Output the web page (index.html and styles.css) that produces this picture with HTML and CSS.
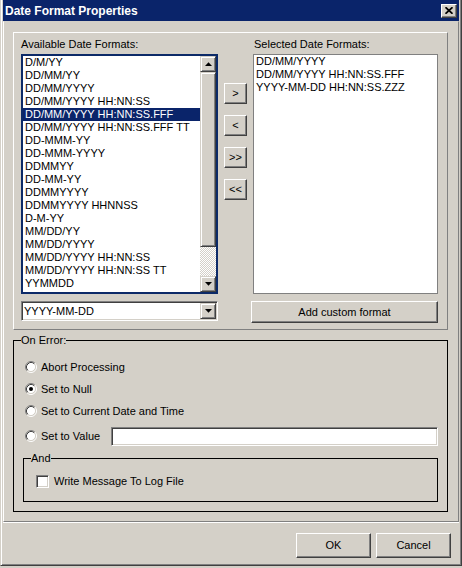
FILE: index.html
```html
<!DOCTYPE html>
<html>
<head>
<meta charset="utf-8">
<title>Date Format Properties</title>
<link rel="stylesheet" href="styles.css">
</head>
<body>
<div class="window">
  <div class="titlebar">
    <span class="title">Date Format Properties</span>
    <span class="close"><svg width="8" height="7" viewBox="0 0 8 7"><path d="M0.5 0.2 L7.5 6.8 M7.5 0.2 L0.5 6.8" stroke="#000" stroke-width="1.7" fill="none"/></svg></span>
  </div>
  <div class="frame">
    <div class="panel">
      <div class="col-left">
        <div class="label">Available Date Formats:</div>
        <div class="listbox focused">
          <div class="items">
            <div class="item">D/M/YY</div>
            <div class="item">DD/MM/YY</div>
            <div class="item">DD/MM/YYYY</div>
            <div class="item">DD/MM/YYYY HH:NN:SS</div>
            <div class="item selected">DD/MM/YYYY HH:NN:SS.FFF</div>
            <div class="item">DD/MM/YYYY HH:NN:SS.FFF TT</div>
            <div class="item">DD-MMM-YY</div>
            <div class="item">DD-MMM-YYYY</div>
            <div class="item">DDMMYY</div>
            <div class="item">DD-MM-YY</div>
            <div class="item">DDMMYYYY</div>
            <div class="item">DDMMYYYY HHNNSS</div>
            <div class="item">D-M-YY</div>
            <div class="item">MM/DD/YY</div>
            <div class="item">MM/DD/YYYY</div>
            <div class="item">MM/DD/YYYY HH:NN:SS</div>
            <div class="item">MM/DD/YYYY HH:NN:SS TT</div>
            <div class="item">YYMMDD</div>
            <div class="item">YYYYMMDD</div>
          </div>
          <div class="vscroll">
            <div class="sbtn"><svg width="7" height="4" viewBox="0 0 7 4"><polygon points="0,4 7,4 3.5,0.3" fill="#000"/></svg></div>
            <div class="thumb"></div>
            <div class="track"></div>
            <div class="sbtn"><svg width="7" height="4" viewBox="0 0 7 4"><polygon points="0,0 7,0 3.5,3.7" fill="#000"/></svg></div>
          </div>
        </div>
        <div class="combo">
          <span class="combo-text">YYYY-MM-DD</span>
          <span class="sbtn"><svg width="7" height="4" viewBox="0 0 7 4"><polygon points="0,0 7,0 3.5,3.7" fill="#000"/></svg></span>
        </div>
      </div>
      <div class="col-mid">
        <button class="btn move">&gt;</button>
        <button class="btn move">&lt;</button>
        <button class="btn move">&gt;&gt;</button>
        <button class="btn move">&lt;&lt;</button>
      </div>
      <div class="col-right">
        <div class="label label-right">Selected Date Formats:</div>
        <div class="listbox plain">
          <div class="items">
            <div class="item">DD/MM/YYYY</div>
            <div class="item">DD/MM/YYYY HH:NN:SS.FFF</div>
            <div class="item">YYYY-MM-DD HH:NN:SS.ZZZ</div>
          </div>
        </div>
        <button class="btn wide">Add custom format</button>
      </div>
    </div>

    <fieldset class="group onerror">
      <legend>On Error:</legend>
      <div class="group-body">
        <div class="radio-row">
          <svg class="radio" width="12" height="12" viewBox="0 0 12 12"><circle cx="6" cy="6" r="4.5" fill="#fff"/><path d="M2.11 9.89 A5.5 5.5 0 0 1 9.89 2.11" stroke="#808080" fill="none"/><path d="M9.89 2.11 A5.5 5.5 0 0 1 2.11 9.89" stroke="#fff" fill="none"/><path d="M2.82 9.18 A4.5 4.5 0 0 1 9.18 2.82" stroke="#404040" fill="none"/><path d="M9.18 2.82 A4.5 4.5 0 0 1 2.82 9.18" stroke="#d4d0c8" fill="none"/></svg>
          <span>Abort Processing</span>
        </div>
        <div class="radio-row">
          <svg class="radio" width="12" height="12" viewBox="0 0 12 12"><circle cx="6" cy="6" r="4.5" fill="#fff"/><path d="M2.11 9.89 A5.5 5.5 0 0 1 9.89 2.11" stroke="#808080" fill="none"/><path d="M9.89 2.11 A5.5 5.5 0 0 1 2.11 9.89" stroke="#fff" fill="none"/><path d="M2.82 9.18 A4.5 4.5 0 0 1 9.18 2.82" stroke="#404040" fill="none"/><path d="M9.18 2.82 A4.5 4.5 0 0 1 2.82 9.18" stroke="#d4d0c8" fill="none"/><circle cx="6" cy="6" r="2" fill="#000"/></svg>
          <span>Set to Null</span>
        </div>
        <div class="radio-row">
          <svg class="radio" width="12" height="12" viewBox="0 0 12 12"><circle cx="6" cy="6" r="4.5" fill="#fff"/><path d="M2.11 9.89 A5.5 5.5 0 0 1 9.89 2.11" stroke="#808080" fill="none"/><path d="M9.89 2.11 A5.5 5.5 0 0 1 2.11 9.89" stroke="#fff" fill="none"/><path d="M2.82 9.18 A4.5 4.5 0 0 1 9.18 2.82" stroke="#404040" fill="none"/><path d="M9.18 2.82 A4.5 4.5 0 0 1 2.82 9.18" stroke="#d4d0c8" fill="none"/></svg>
          <span>Set to Current Date and Time</span>
        </div>
        <div class="radio-row value-row">
          <svg class="radio" width="12" height="12" viewBox="0 0 12 12"><circle cx="6" cy="6" r="4.5" fill="#fff"/><path d="M2.11 9.89 A5.5 5.5 0 0 1 9.89 2.11" stroke="#808080" fill="none"/><path d="M9.89 2.11 A5.5 5.5 0 0 1 2.11 9.89" stroke="#fff" fill="none"/><path d="M2.82 9.18 A4.5 4.5 0 0 1 9.18 2.82" stroke="#404040" fill="none"/><path d="M9.18 2.82 A4.5 4.5 0 0 1 2.82 9.18" stroke="#d4d0c8" fill="none"/></svg>
          <span class="value-label">Set to Value</span>
          <span class="textbox"></span>
        </div>

        <fieldset class="group and">
          <legend>And</legend>
          <div class="and-body">
            <div class="check-row">
              <span class="checkbox"></span>
              <span>Write Message To Log File</span>
            </div>
          </div>
        </fieldset>
      </div>
    </fieldset>
  </div>
  <div class="footer">
    <button class="btn action">OK</button>
    <button class="btn action">Cancel</button>
  </div>
</div>
</body>
</html>
```

FILE: styles.css
```css
* { box-sizing: border-box; }

html, body {
  margin: 0;
  padding: 0;
}

body {
  width: 462px;
  height: 568px;
  overflow: hidden;
  background: #d4d0c8;
  font-family: "Liberation Sans", Arial, sans-serif;
  font-size: 11px;
  line-height: 13px;
  color: #000;
}

.window {
  width: 462px;
  height: 566px;
  display: flex;
  flex-direction: column;
  background: #d4d0c8;
  border-left: 1px solid #d4d0c8;
  border-right: 1px solid #404040;
  border-bottom: 1px solid #404040;
  padding: 0 2px 2px 2px;
  box-shadow: inset 1px 0 #fff, inset -1px -1px #808080;
}

/* title bar */
.titlebar {
  height: 21px;
  flex: none;
  display: flex;
  align-items: center;
  justify-content: space-between;
  background: #0a246a;
  padding: 0 2px 0 2px;
}

.title {
  color: #fff;
  font-weight: bold;
  font-size: 12px;
  line-height: 14px;
  padding-top: 1px;
}

.close {
  width: 16px;
  height: 14px;
  display: flex;
  align-items: center;
  justify-content: center;
  background: #d4d0c8;
  border: 1px solid;
  border-color: #fff #404040 #404040 #fff;
  box-shadow: inset -1px -1px #808080;
}

/* main frame */
.frame {
  flex: none;
  height: 501px;
  border: 1px solid;
  border-color: #d4d0c8 #808080 #808080 #fff;
  padding: 10px 10px 9px 9px;
}

.panel {
  height: 298px;
  display: flex;
  align-items: flex-start;
  border: 1px solid;
  border-color: #fff #808080 #808080 #fff;
  padding: 5px 9px 0 7px;
}

.col-left {
  width: 197px;
  flex: none;
}

.col-mid {
  width: 23px;
  flex: none;
  margin-left: 6px;
  padding-top: 45px;
  display: flex;
  flex-direction: column;
  gap: 11px;
}

.col-right {
  width: 187px;
  flex: none;
  margin-left: 4px;
}

.label {
  height: 13px;
  white-space: nowrap;
}

.label-right {
  padding-left: 3px;
}

/* list boxes */
.listbox {
  margin-top: 3px;
  height: 240px;
  background: #fff;
  display: flex;
  overflow: hidden;
}

.listbox.focused {
  border: 2px solid #0c2a68;
}

.listbox.plain {
  margin-left: 2px;
  width: 185px;
  border: 1px solid #808080;
}

.items {
  flex: 1;
  min-width: 0;
  overflow: hidden;
}

.item {
  height: 13px;
  line-height: 13px;
  padding-left: 2px;
  white-space: nowrap;
}

.item.selected {
  background: #0a246a;
  color: #fff;
}

.plain .item {
  padding-left: 2px;
}

/* scrollbar */
.vscroll {
  width: 16px;
  flex: none;
  display: flex;
  flex-direction: column;
}

.sbtn {
  width: 16px;
  height: 16px;
  flex: none;
  display: flex;
  align-items: center;
  justify-content: center;
  background: #d4d0c8;
  border: 1px solid;
  border-color: #d4d0c8 #404040 #404040 #d4d0c8;
  box-shadow: inset 1px 1px #fff, inset -1px -1px #808080;
}

.thumb {
  height: 175px;
  flex: none;
  background: #d4d0c8;
  border: 1px solid;
  border-color: #d4d0c8 #404040 #404040 #d4d0c8;
  box-shadow: inset 1px 1px #fff, inset -1px -1px #808080;
}

.track {
  flex: 1;
  background: repeating-conic-gradient(#fff 0 25%, #d4d0c8 0 50%) 0 0 / 2px 2px;
}

/* combo */
.combo {
  margin-top: 7px;
  height: 20px;
  display: flex;
  align-items: center;
  background: #fff;
  border: 1px solid;
  border-color: #808080 #fff #fff #808080;
  box-shadow: inset 1px 1px #404040, inset -1px -1px #d4d0c8;
  padding: 1px;
}

.combo-text {
  flex: 1;
  padding-left: 1px;
  white-space: nowrap;
}

/* buttons */
.btn {
  font-family: "Liberation Sans", Arial, sans-serif;
  font-size: 11px;
  line-height: 13px;
  color: #000;
  background: #d4d0c8;
  border: 1px solid;
  border-color: #fff #404040 #404040 #fff;
  box-shadow: inset -1px -1px #808080;
  padding: 0;
  margin: 0;
  text-align: center;
}

.btn.move {
  width: 23px;
  height: 21px;
}

.btn.wide {
  display: block;
  width: 187px;
  height: 22px;
  margin-top: 7px;
}

.btn.action {
  width: 75px;
  height: 25px;
}

/* group boxes */
.group {
  margin: 0;
  padding: 0;
  border: 1px solid #000;
  min-width: 0;
}

.group legend {
  padding: 0;
  margin-left: 7px;
  line-height: 13px;
  height: 13px;
}

.onerror {
  margin-top: 4px;
}

.group-body {
  padding: 9px 9px 9px 9px;
}

.radio-row {
  height: 22px;
  display: flex;
  align-items: center;
  gap: 4px;
  padding-left: 2px;
  white-space: nowrap;
}

.radio {
  flex: none;
  display: block;
}

.value-row {
  margin-top: 3px;
}

.value-label {
  width: 66px;
  flex: none;
}

.textbox {
  flex: 1;
  height: 19px;
  background: #fff;
  border: 1px solid;
  border-color: #808080 #fff #fff #808080;
  box-shadow: inset 1px 1px #404040, inset -1px -1px #d4d0c8;
}

.and {
  margin-top: 5px;
}

.and-body {
  padding: 5px 9px 9px 12px;
}

.check-row {
  height: 22px;
  display: flex;
  align-items: center;
  gap: 5px;
  white-space: nowrap;
}

.checkbox {
  width: 13px;
  height: 13px;
  flex: none;
  background: #fff;
  border: 1px solid;
  border-color: #808080 #fff #fff #808080;
  box-shadow: inset 1px 1px #404040, inset -1px -1px #d4d0c8;
}

/* footer */
.footer {
  flex: 1;
  display: flex;
  justify-content: flex-end;
  align-items: flex-start;
  gap: 5px;
  border-top: 1px solid #fff;
  padding: 10px 8px 0 0;
}
```
